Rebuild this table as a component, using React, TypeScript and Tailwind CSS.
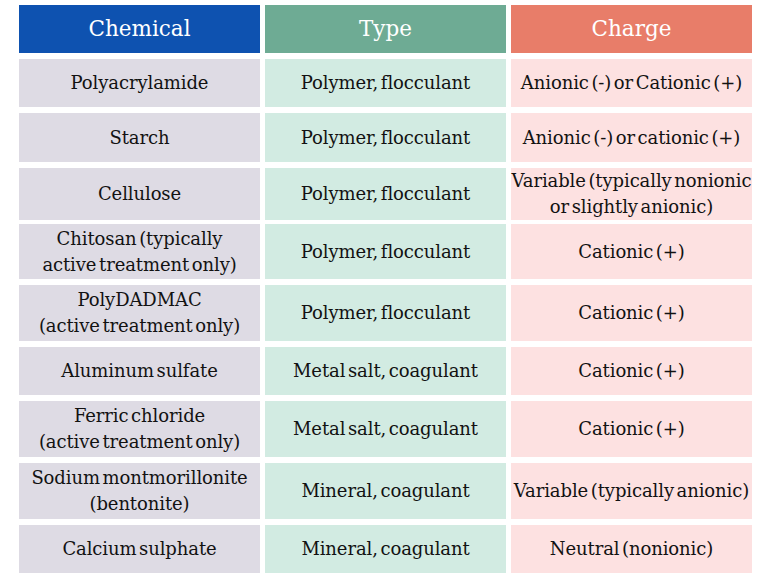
const ROWS: { chem: string[]; type: string; charge: string[]; h: string }[] = [
  { chem: ["Polyacrylamide"], type: "Polymer, flocculant", charge: ["Anionic (-) or Cationic (+)"], h: "h-[48px]" },
  { chem: ["Starch"], type: "Polymer, flocculant", charge: ["Anionic (-) or cationic (+)"], h: "h-[49px]" },
  { chem: ["Cellulose"], type: "Polymer, flocculant", charge: ["Variable (typically nonionic", "or slightly anionic)"], h: "h-[50px]" },
  { chem: ["Chitosan (typically", "active treatment only)"], type: "Polymer, flocculant", charge: ["Cationic (+)"], h: "h-[55px]" },
  { chem: ["PolyDADMAC", "(active treatment only)"], type: "Polymer, flocculant", charge: ["Cationic (+)"], h: "h-[56px]" },
  { chem: ["Aluminum sulfate"], type: "Metal salt, coagulant", charge: ["Cationic (+)"], h: "h-[48px]" },
  { chem: ["Ferric chloride", "(active treatment only)"], type: "Metal salt, coagulant", charge: ["Cationic (+)"], h: "h-[56px]" },
  { chem: ["Sodium montmorillonite", "(bentonite)"], type: "Mineral, coagulant", charge: ["Variable (typically anionic)"], h: "h-[56px]" },
  { chem: ["Calcium sulphate"], type: "Mineral, coagulant", charge: ["Neutral (nonionic)"], h: "h-[48px]" },
];

function Cell({ lines, bg }: { lines: string[]; bg: string }) {
  return (
    <div className={`${bg} flex flex-col items-center justify-center text-center leading-[26px]`}>
      {lines.map((l) => (
        <span key={l} className="whitespace-nowrap">
          {l}
        </span>
      ))}
    </div>
  );
}

export default function App() {
  return (
    <div className="w-[768px] h-[576px] bg-white pt-[5px] pl-[19px] font-['DejaVu_Serif',serif] text-[#121212]">
      <div className="flex flex-col gap-[6px] w-[733px]">
        <div className="grid grid-cols-3 gap-[5px] h-[48px] text-white text-[21.5px]">
          <div className="bg-[#0e52b0] flex items-center justify-center">Chemical</div>
          <div className="bg-[#6eab94] flex items-center justify-center">Type</div>
          <div className="bg-[#e87d69] flex items-center justify-center">Charge</div>
        </div>
        {ROWS.map((r) => (
          <div
            key={r.chem[0]}
            className={`grid grid-cols-3 gap-[5px] ${r.h} text-[18px] tracking-[-0.1px] [word-spacing:-3px]`}
          >
            <Cell lines={r.chem} bg="bg-[#dedbe4]" />
            <Cell lines={[r.type]} bg="bg-[#d2ebe2]" />
            <Cell lines={r.charge} bg="bg-[#fde1e1]" />
          </div>
        ))}
      </div>
    </div>
  );
}
